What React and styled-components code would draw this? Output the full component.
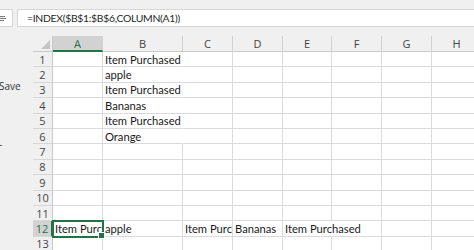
import React from "react";
import styled, { createGlobalStyle } from "styled-components";

const Global = createGlobalStyle`
  html, body { margin: 0; padding: 0; width: 474px; height: 250px; overflow: hidden; background: #f0f0f0; }
  #root { width: 474px; height: 250px; overflow: hidden; }
`;

const Page = styled.div`
  display: flex;
  flex-direction: column;
  width: 474px;
  height: 250px;
  background: #f0f0f0;
  font-family: "Open Sans", "Noto Sans", sans-serif;
`;

const FormulaBar = styled.div`
  display: flex;
  align-items: stretch;
  gap: 4px;
  height: 18px;
  margin-top: 9px;
`;

const NameBox = styled.div`
  width: 13px;
  background: #ffffff;
  border: 1px solid #d6d6d6;
  border-left: none;
  box-sizing: border-box;
  display: flex;
  align-items: center;
`;

const FormulaInput = styled.div`
  flex: 1;
  background: #ffffff;
  border: 1px solid #d6d6d6;
  border-right: none;
  box-sizing: border-box;
  padding-left: 9px;
  display: flex;
  align-items: center;
  font-family: "Lato", "Liberation Sans", sans-serif;
  font-size: 10.4px;
  letter-spacing: -0.3px;
  color: #262626;
  white-space: nowrap;
  overflow: hidden;
`;

const Body = styled.div`
  display: flex;
  flex: 1;
  padding-top: 9px;
  min-height: 0;
`;

const SidePanel = styled.div`
  width: 33px;
  flex: none;
  display: flex;
  flex-direction: column;
  font-size: 10px;
  color: #333;
  overflow: hidden;
`;

const SideLabel = styled.div`
  line-height: 14px;
  margin-top: ${(p) => p.$top}px;
  margin-left: -1px;
  white-space: nowrap;
`;

const Grid = styled.div`
  display: grid;
  grid-template-columns: 20px 50px 80px 50px 50px 49px 50px 50px 50px;
  grid-template-rows: 16px repeat(13, 15.4px);
  background: #ffffff;
  flex: none;
`;

const Corner = styled.div`
  background: #f0f0f0;
  border-right: 1px solid #c9c9c9;
  border-bottom: 1px solid #c9c9c9;
  box-sizing: border-box;
  display: flex;
  align-items: flex-end;
  justify-content: flex-end;
  padding: 0 2px 2px 0;
`;

const ColHead = styled.div`
  box-sizing: border-box;
  background: ${(p) => (p.$sel ? "#d2d2d2" : "#f0f0f0")};
  border-right: 1px solid #d0d0d0;
  border-bottom: ${(p) => (p.$sel ? "2px solid #217346" : "1px solid #c9c9c9")};
  display: flex;
  align-items: center;
  justify-content: center;
  font-size: 11px;
  color: ${(p) => (p.$sel ? "#217346" : "#444")};
  padding-top: ${(p) => (p.$sel ? "1px" : "0")};
`;

const RowHead = styled.div`
  box-sizing: border-box;
  background: ${(p) => (p.$sel ? "#d2d2d2" : "#f0f0f0")};
  border-right: ${(p) => (p.$sel ? "2px solid #217346" : "1px solid #c9c9c9")};
  border-bottom: 1px solid #d6d6d6;
  display: flex;
  align-items: center;
  justify-content: center;
  font-size: 11px;
  color: ${(p) => (p.$sel ? "#217346" : "#444")};
`;

const Cell = styled.div`
  position: relative;
  box-sizing: border-box;
  border-right: 1px solid ${(p) => (p.$spill ? "transparent" : "#dadada")};
  border-bottom: 1px solid #dadada;
  overflow: ${(p) => (p.$spill ? "visible" : "hidden")};
  white-space: nowrap;
  display: flex;
  align-items: center;
  padding-left: 2px;
  font-family: "Lato", "Liberation Sans", sans-serif;
  font-size: 11.2px;
  color: #1a1a1a;
  z-index: ${(p) => (p.$spill ? 1 : 0)};
  ${(p) =>
    p.$active &&
    `
    outline: 2px solid #217346;
    outline-offset: -1px;
    overflow: visible;
    z-index: 2;
  `}
`;

const Clip = styled.span`
  display: block;
  overflow: hidden;
  width: 100%;
`;

const FillHandle = styled.span`
  position: absolute;
  right: -3px;
  bottom: -3px;
  width: 5px;
  height: 5px;
  background: #217346;
  border: 1px solid #ffffff;
`;

const cols = ["A", "B", "C", "D", "E", "F", "G", "H"];
const data = {
  1: { B: "Item Purchased" },
  2: { B: "apple" },
  3: { B: "Item Purchased" },
  4: { B: "Bananas" },
  5: { B: "Item Purchased" },
  6: { B: "Orange" },
  12: { A: "Item Purchased", B: "apple", C: "Item Purchased", D: "Bananas", E: "Item Purchased" },
};

export default function App() {
  const rows = Array.from({ length: 13 }, (_, i) => i + 1);
  return (
    <Page>
      <Global />
      <FormulaBar>
        <NameBox>
          <svg width="8" height="10" viewBox="0 0 8 10">
            <path d="M0 3.5h5M0 5.5h6M0 7.5h4" stroke="#7a7a7a" strokeWidth="1" />
          </svg>
        </NameBox>
        <FormulaInput>=INDEX($B$1:$B$6,COLUMN(A1))</FormulaInput>
      </FormulaBar>
      <Body>
        <SidePanel>
          <SideLabel $top={43}>Save</SideLabel>
          <SideLabel $top={44}>-</SideLabel>
        </SidePanel>
        <Grid>
          <Corner>
            <svg width="9" height="9" viewBox="0 0 9 9">
              <path d="M9 0V9H0Z" fill="#c4c4c4" />
            </svg>
          </Corner>
          {cols.map((c) => (
            <ColHead key={c} $sel={c === "A"}>
              {c}
            </ColHead>
          ))}
          {rows.map((r) => (
            <React.Fragment key={r}>
              <RowHead $sel={r === 12}>{r}</RowHead>
              {cols.map((c, ci) => {
                const val = data[r] && data[r][c];
                const next = data[r] && data[r][cols[ci + 1]];
                const spill = !!val && !next;
                const active = r === 12 && c === "A";
                return (
                  <Cell key={c} $spill={spill && !active} $active={active}>
                    {val ? (active ? <Clip>{val}</Clip> : val) : null}
                    {active && <FillHandle />}
                  </Cell>
                );
              })}
            </React.Fragment>
          ))}
        </Grid>
      </Body>
    </Page>
  );
}
